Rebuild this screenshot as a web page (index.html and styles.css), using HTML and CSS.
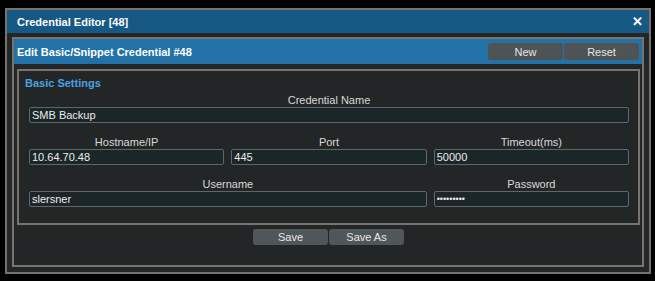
FILE: index.html
```html
<!DOCTYPE html>
<html>
<head>
<meta charset="utf-8">
<link rel="stylesheet" href="styles.css">
</head>
<body>
<div class="window">
  <div class="titlebar">
    <span class="title">Credential Editor [48]</span>
    <span class="close">✕</span>
  </div>
  <div class="wbody">
    <div class="panel">
      <div class="phead">
        <span class="ptitle">Edit Basic/Snippet Credential #48</span>
        <div class="hbtns">
          <button class="btn hbtn">New</button>
          <button class="btn hbtn">Reset</button>
        </div>
      </div>
      <div class="pbody">
        <div class="fieldset">
          <div class="legend">Basic Settings</div>
          <div class="grid">
            <div class="field span3">
              <div class="label">Credential Name</div>
              <div class="input">SMB Backup</div>
            </div>
            <div class="field">
              <div class="label">Hostname/IP</div>
              <div class="input">10.64.70.48</div>
            </div>
            <div class="field">
              <div class="label">Port</div>
              <div class="input">445</div>
            </div>
            <div class="field">
              <div class="label">Timeout(ms)</div>
              <div class="input">50000</div>
            </div>
            <div class="field span2">
              <div class="label">Username</div>
              <div class="input">slersner</div>
            </div>
            <div class="field">
              <div class="label">Password</div>
              <div class="input pw">•••••••••</div>
            </div>
          </div>
        </div>
        <div class="actions">
          <button class="btn abtn">Save</button>
          <button class="btn abtn">Save As</button>
        </div>
      </div>
    </div>
  </div>
</div>
</body>
</html>
```
FILE: styles.css
```css
html, body {
  margin: 0;
  padding: 0;
  background: #000;
  font-family: "Liberation Sans", Arial, sans-serif;
}
.window {
  margin: 8px 0 0 5px;
  width: 642px;
  height: 262px;
  border: 2px solid #78736c;
  background: #232627;
  display: flex;
  flex-direction: column;
}
.titlebar {
  height: 23px;
  background: #175985;
  display: flex;
  align-items: center;
  justify-content: space-between;
  padding: 0 6px 0 10px;
  color: #fff;
}
.title {
  font-weight: bold;
  font-size: 11px;
}
.close {
  font-weight: bold;
  font-size: 13px;
  color: #fff;
}
.wbody {
  flex: 1;
  padding: 4px 5px 5px 5px;
  display: flex;
}
.panel {
  flex: 1;
  border: 2px solid #78736c;
  display: flex;
  flex-direction: column;
}
.phead {
  height: 25px;
  background: #2272a8;
  display: flex;
  align-items: center;
  justify-content: space-between;
  padding: 0 3px 0 3px;
}
.ptitle {
  color: #fff;
  font-weight: bold;
  font-size: 11px;
}
.hbtns {
  display: flex;
  gap: 1px;
}
.btn {
  border: none;
  border-radius: 3px;
  background: #50575a;
  color: #e6e6e6;
  font-family: "Liberation Sans", Arial, sans-serif;
  font-size: 11px;
  padding: 0;
  margin: 0;
}
.hbtn {
  width: 75px;
  height: 17px;
  background: #4e5456;
}
.pbody {
  flex: 1;
  padding: 5px 2px 0 3px;
  display: flex;
  flex-direction: column;
}
.fieldset {
  border: 2px solid #78736c;
  padding: 5px 9px 16px 10px;
}
.legend {
  color: #4ba2e0;
  font-weight: bold;
  font-size: 11px;
  line-height: 14px;
  margin-left: -4px;
}
.grid {
  display: grid;
  grid-template-columns: 1fr 1fr 1fr;
  column-gap: 7px;
  row-gap: 12px;
  margin-top: 3px;
}
.span3 { grid-column: span 3; }
.span2 { grid-column: span 2; }
.label {
  text-align: center;
  color: #d8d8d8;
  font-size: 11px;
  line-height: 14px;
}
.input {
  height: 14px;
  border: 1px solid #5e686b;
  border-radius: 2px;
  background: #1b2628;
  color: #ececec;
  font-size: 11px;
  line-height: 14px;
  padding-left: 2px;
}
.pw {
  font-size: 9px;
}
.actions {
  display: flex;
  justify-content: center;
  gap: 1px;
  margin-top: 4px;
}
.abtn {
  width: 75px;
  height: 16px;
}
```
